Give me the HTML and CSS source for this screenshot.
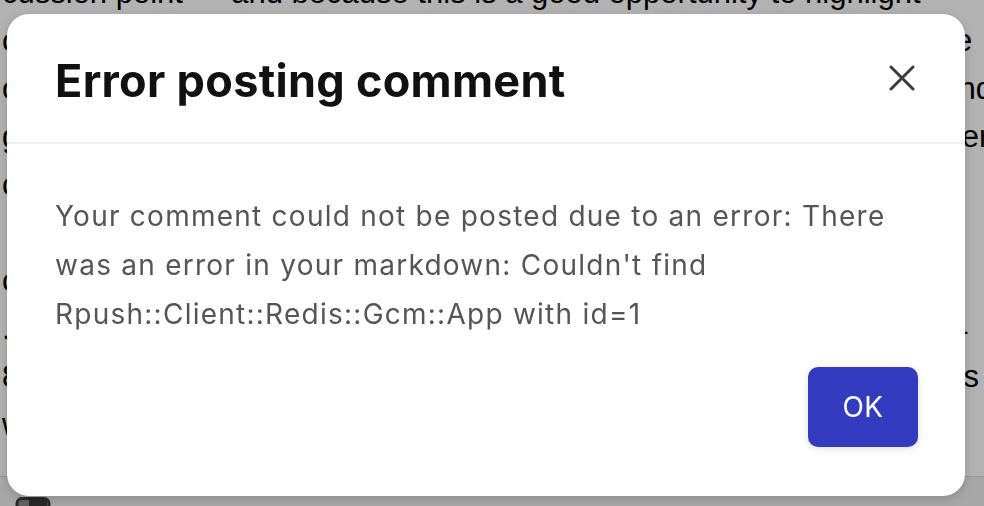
FILE: index.html
```html
<!DOCTYPE html>
<html lang="en">
<head>
  <meta charset="UTF-8">
  <meta name="viewport" content="width=device-width, initial-scale=1.0">
  <title>Error posting comment</title>
  <link rel="stylesheet" href="styles.css">
</head>
<body>
  <div class="page">
    <div class="article">
      <p>cussion point — and because this is a good opportunity to highlight<br>
      can we review how the notification workers behave under load, and vie<br>
      operations on the queue so that the whole team can come back to it and could<br>
      going forward as a reference for what we might run into when the server<br>
      cleanup of the old cache.</p>
      <p>crashed again on deploy.<br>
      .. the trace in issue #1142 shows the batch of pushes failing at 12:00-4<br>
      8 devices that never got the notification, which is also why Monday was<br>
      was bad.</p>
    </div>
    <div class="toolbar">
      <svg class="tool-icon" width="36" height="10" viewBox="0 0 36 10">
        <rect x="2" y="1.5" width="32" height="30" rx="5" fill="#8c8c8c" stroke="#3a3a3a" stroke-width="3"/>
        <rect x="14" y="1.5" width="18" height="9" fill="#3a3a3a"/>
      </svg>
    </div>
  </div>

  <div class="overlay"></div>

  <div class="modal">
    <div class="modal-header">
      <h2>Error posting comment</h2>
      <button class="close" type="button" aria-label="Close">
        <svg width="26" height="26" viewBox="0 0 26 26">
          <path d="M2 2 L24 24 M24 2 L2 24" stroke="#3a3a3a" stroke-width="3" stroke-linecap="round"/>
        </svg>
      </button>
    </div>
    <div class="modal-body">
      <p>Your comment could not be posted due to an error: There was an error in your markdown: Couldn't find Rpush::Client::Redis::Gcm::App with id=1</p>
    </div>
    <div class="modal-footer">
      <button class="ok" type="button">OK</button>
    </div>
  </div>
</body>
</html>
```

FILE: styles.css
```css
body {
  margin: 0;
  background: #fff;
  overflow: hidden;
  height: 506px;
}
.page {
  display: flex;
  flex-direction: column;
  height: 506px;
}
.article {
  flex: 1;
  overflow: hidden;
  font-family: "Liberation Sans", Arial, sans-serif;
  font-size: 31px;
  line-height: 48px;
  color: #000;
  white-space: nowrap;
  padding-left: 2px;
  margin-top: -31px;
}
.article p {
  margin: 0 0 48px;
}
.toolbar {
  height: 30px;
  flex-shrink: 0;
  background: #f0f0f0;
  border-top: 1px solid #d8d8d8;
  padding: 20px 0 0 15px;
  box-sizing: border-box;
}
.tool-icon {
  display: block;
}
.overlay {
  position: fixed;
  inset: 0;
  background: rgba(0, 0, 0, 0.3);
}
.modal {
  position: fixed;
  left: 7px;
  top: 14px;
  width: 958px;
  height: 482px;
  background: #fff;
  border-radius: 22px;
  box-shadow: 0 3px 12px rgba(0, 0, 0, 0.18);
  display: flex;
  flex-direction: column;
  font-family: Inter, "Noto Sans", sans-serif;
}
.modal-header {
  height: 128px;
  border-bottom: 2px solid #eeeeee;
  display: flex;
  align-items: center;
  justify-content: space-between;
  padding: 0 48px;
}
.modal-header h2 {
  margin: 4px 0 0;
  font-size: 45px;
  font-weight: 700;
  color: #111;
  letter-spacing: 0.3px;
}
.close {
  background: none;
  border: none;
  padding: 0;
  width: 26px;
  height: 26px;
  margin-right: 2px;
  cursor: pointer;
}
.close svg {
  display: block;
}
.modal-body {
  padding: 48px 48px 0;
}
.modal-body p {
  margin: 0;
  font-size: 28px;
  line-height: 49px;
  letter-spacing: 1.25px;
  color: #555;
}
.modal-footer {
  margin-top: auto;
  padding: 0 47px 49px;
  display: flex;
  justify-content: flex-end;
}
.ok {
  width: 110px;
  height: 80px;
  background: #333cbf;
  color: #fff;
  border: none;
  border-radius: 10px;
  font-family: Inter, "Noto Sans", sans-serif;
  font-size: 28px;
  letter-spacing: 0.5px;
  box-shadow: 0 2px 8px rgba(0, 0, 0, 0.12);
  cursor: pointer;
}
```
